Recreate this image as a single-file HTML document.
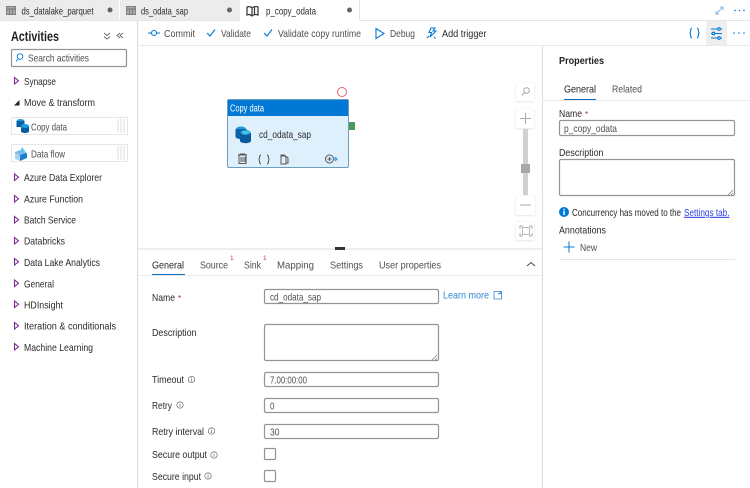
<!DOCTYPE html>
<html><head><meta charset="utf-8"><style>
html,body{margin:0;padding:0;background:#fff;width:750px;height:488px;overflow:hidden}
svg{display:block}
text{font-family:"Liberation Sans",sans-serif;font-size:10.5px;fill:#2b2a29}
.g{fill:#4f4f4f}
.i{fill:none;stroke:#0078d4;stroke-width:1.100}
.inp{fill:#fff;stroke:#949494;stroke-width:1.200}
.ic{fill:none;stroke:#555;stroke-width:1}
.tri{fill:#fff;stroke:#7a2a90;stroke-width:1.100}
</style></head><body>
<svg width="750" height="488" viewBox="0 0 750 488" xmlns="http://www.w3.org/2000/svg">
<defs><filter id="s" x="-30%" y="-30%" width="160%" height="160%"><feDropShadow dx="0" dy="0.500" stdDeviation="1" flood-color="#000" flood-opacity=".14"/></filter></defs>
<!-- tabs -->
<rect x="0" y="0" width="359" height="20" fill="#ececec"/>
<rect x="119" y="0" width="1" height="20" fill="#fff"/>
<rect x="240" y="0" width="119" height="21" fill="#fff"/>
<rect x="359" y="0" width="1" height="20" fill="#e4e4e4"/>
<rect x="360" y="20" width="390" height="1" fill="#e6e6e6"/>
<rect x="0" y="20" width="240" height="1" fill="#e6e6e6"/>
<g fill="#aaa" stroke="#777" stroke-width=".9"><rect x="6.500" y="6.500" width="9" height="8"/><path d="M6.500 9h9M9.500 9v5.500M12.500 9v5.500"/><rect x="126.500" y="6.500" width="9" height="8"/><path d="M126.500 9h9M129.500 9v5.500M132.500 9v5.500"/></g>
<g fill="none" stroke="#333" stroke-width="1.200"><path d="M247 7c3-1 4 0 5 1c1-1 3-2 6-1v8c-3-1-5 0-6 1c-1-1-3-2-5-1zM252 8v8M254.500 7v8"/></g>
<text x="21.500" y="14.300" textLength="72" lengthAdjust="spacingAndGlyphs">ds_datalake_parquet</text>
<text x="141" y="14.300" textLength="47" lengthAdjust="spacingAndGlyphs">ds_odata_sap</text>
<text x="266" y="14.300" textLength="50" lengthAdjust="spacingAndGlyphs">p_copy_odata</text>
<circle cx="110" cy="10" r="2.500" fill="#666"/><circle cx="229.500" cy="10" r="2.500" fill="#666"/><circle cx="349.500" cy="10" r="2.500" fill="#666"/>
<path d="M716 14l7-7M720 7h3v3M716 11v3h3" fill="none" stroke="#8ab8de" stroke-width="1"/>
<g fill="#0078d4"><circle cx="735" cy="10.500" r=".8"/><circle cx="739.500" cy="10.500" r=".8"/><circle cx="744" cy="10.500" r=".8"/></g>
<!-- toolbar -->
<rect x="137" y="45" width="613" height="1" fill="#e8e8e8"/>
<rect x="137" y="21" width="1" height="467" fill="#dcdcdc"/>
<g class="i"><circle cx="154" cy="33" r="2.500"/><path d="M148 33h3.500M156.500 33h3.500"/><path d="M207 33l3 3l5-6.500"/><path d="M264 33l3 3l5-6.500"/><path d="M376 28.500v10l8-5z"/></g>
<text class="g" x="164" y="37" textLength="31" lengthAdjust="spacingAndGlyphs">Commit</text>
<text class="g" x="221" y="37" textLength="30" lengthAdjust="spacingAndGlyphs">Validate</text>
<text class="g" x="278" y="37" textLength="83" lengthAdjust="spacingAndGlyphs">Validate copy runtime</text>
<text class="g" x="390" y="37" textLength="25" lengthAdjust="spacingAndGlyphs">Debug</text>
<path class="i" d="M431 28h4l-2 3h3l-6 6l1.500-4.500h-2.500zM434 37l1.500 1.500M429 36l-2 2" />
<text x="442" y="37" textLength="44.500" lengthAdjust="spacingAndGlyphs">Add trigger</text>
<path class="i" d="M692 28c-2 0-1 4-2 5c1 1 0 5 2 5M697 28c2 0 1 4 2 5c-1 1 0 5-2 5"/>
<rect x="706" y="21" width="21" height="24" fill="#eeeeee"/>
<g class="i"><path d="M711 29h11M711 33.500h11M711 38h11"/><circle cx="719" cy="29" r="1.300" fill="#eee"/><circle cx="713.500" cy="33.500" r="1.300" fill="#eee"/><circle cx="719" cy="38" r="1.300" fill="#eee"/></g>
<g fill="#0078d4"><circle cx="734" cy="33" r=".8"/><circle cx="739" cy="33" r=".8"/><circle cx="744" cy="33" r=".8"/></g>
<!-- sidebar -->
<text x="11" y="41" textLength="48" lengthAdjust="spacingAndGlyphs" style="font-size:14px;font-weight:bold;fill:#222">Activities</text>
<path d="M104 33l3 2.500l3-2.500M104 36.500l3 2.500l3-2.500M120 33l-3 2.500l3 2.500M123 33l-3 2.500l3 2.500" fill="none" stroke="#666" stroke-width=".9"/>
<rect x="11.500" y="49.500" width="115" height="17" rx="1" class="inp"/>
<circle cx="20" cy="56.500" r="2.800" fill="none" stroke="#0078d4" stroke-width=".9"/><path d="M18 59l-2 2.500" stroke="#0078d4" stroke-width=".9"/>
<text class="g" x="28" y="61.500" textLength="61" lengthAdjust="spacingAndGlyphs">Search activities</text>
<g>
<path class="tri" d="M14.500 77.500v6.500l4-3.250z"/><text x="24" y="84.800" textLength="32" lengthAdjust="spacingAndGlyphs">Synapse</text>
<path d="M14 105.500h5.500v-5.500z" fill="#222"/><text x="24" y="105.800" textLength="71" lengthAdjust="spacingAndGlyphs">Move &amp; transform</text>
<path class="tri" d="M14.500 174v6.500l4-3.250z"/><text x="24" y="181" textLength="78" lengthAdjust="spacingAndGlyphs">Azure Data Explorer</text>
<path class="tri" d="M14.500 195.500v6.500l4-3.250z"/><text x="24" y="202.500" textLength="59" lengthAdjust="spacingAndGlyphs">Azure Function</text>
<path class="tri" d="M14.500 216.500v6.500l4-3.250z"/><text x="24" y="223.500" textLength="52" lengthAdjust="spacingAndGlyphs">Batch Service</text>
<path class="tri" d="M14.500 237.500v6.500l4-3.250z"/><text x="24" y="244.500" textLength="41" lengthAdjust="spacingAndGlyphs">Databricks</text>
<path class="tri" d="M14.500 258.500v6.500l4-3.250z"/><text x="24" y="265.800" textLength="76" lengthAdjust="spacingAndGlyphs">Data Lake Analytics</text>
<path class="tri" d="M14.500 280v6.500l4-3.250z"/><text x="24" y="287.300" textLength="30" lengthAdjust="spacingAndGlyphs">General</text>
<path class="tri" d="M14.500 301v6.500l4-3.250z"/><text x="24" y="308.500" textLength="39" lengthAdjust="spacingAndGlyphs">HDInsight</text>
<path class="tri" d="M14.500 322.500v6.500l4-3.250z"/><text x="24" y="329.500" textLength="92" lengthAdjust="spacingAndGlyphs">Iteration &amp; conditionals</text>
<path class="tri" d="M14.500 343.500v6.500l4-3.250z"/><text x="24" y="350.800" textLength="69" lengthAdjust="spacingAndGlyphs">Machine Learning</text>
</g>
<rect x="11.500" y="117.500" width="116" height="17" fill="#fff" stroke="#e6e6e6"/>
<rect x="11.500" y="144.500" width="116" height="17" fill="#fff" stroke="#e6e6e6"/>
<g stroke="#dcdcdc" stroke-width="1"><path d="M118 119v14M121 119v14M124 119v14M118 146v14M121 146v14M124 146v14"/></g>
<g><ellipse cx="20.500" cy="121" rx="4" ry="2" fill="#1ea0d8"/><rect x="16.500" y="121" width="8" height="6" fill="#0b62a8"/><rect x="21" y="126" width="8" height="5.500" fill="#0a5a9e"/><ellipse cx="25" cy="131.500" rx="4" ry="1.500" fill="#0a5a9e"/><ellipse cx="25" cy="126" rx="4" ry="2" fill="#1ea0d8"/></g>
<text class="g" x="31" y="130.300" textLength="36" lengthAdjust="spacingAndGlyphs">Copy data</text>
<g><path d="M22 147l5 7h-8z" fill="#59c6ee"/><path d="M15 152l5-2l5 3v5l-5 2l-5-2z" fill="#7bb8e6"/><path d="M20 155l7-2v5l-7 3z" fill="#1c7fc9"/><path d="M15 153l5 2v6l-5-2z" fill="#a8d3f0"/></g>
<text class="g" x="31" y="157.300" textLength="34" lengthAdjust="spacingAndGlyphs">Data flow</text>
<!-- node -->
<circle cx="342" cy="92" r="4.500" fill="#fff" stroke="#e5626a" stroke-width="1"/>
<rect x="349" y="122" width="6" height="8" fill="#4b9a5b"/>
<rect x="227.500" y="99.500" width="121" height="68" rx="1.500" fill="#def0fc" stroke="#6a9cbe"/>
<rect x="228" y="100" width="120" height="16" fill="#0078d4"/>
<text x="230" y="111.500" textLength="34" lengthAdjust="spacingAndGlyphs" style="fill:#fff;font-size:10px">Copy data</text>
<g><ellipse cx="241" cy="129" rx="5" ry="2.500" fill="#1ea0d8"/><rect x="235.500" y="129" width="11" height="8" fill="#0b62a8"/><ellipse cx="241" cy="137" rx="5.500" ry="2" fill="#0b62a8"/><rect x="240" y="133" width="11" height="8" fill="#0a5a9e"/><ellipse cx="245.500" cy="141" rx="5.500" ry="2.200" fill="#0a5a9e"/><ellipse cx="245.500" cy="132.500" rx="5" ry="2.500" fill="#1ea0d8"/><ellipse cx="245.500" cy="132.500" rx="4" ry="1.600" fill="#46bfe8"/></g>
<text x="259" y="137.800" textLength="52" lengthAdjust="spacingAndGlyphs">cd_odata_sap</text>
<g class="ic"><path d="M238 155h9M240 155v-1h5v1M239 155.500v8h7v-8M241 157v5M243 157v5M245 157v5"/><path d="M261 155c-2 0-1 3-2 4.500c1 1.500 0 4.500 2 4.500M267 155c2 0 1 3 2 4.500c-1 1.500 0 4.500-2 4.500"/><path d="M281 156h4l1 1v7h-5zM281 156v-1h3l4 3v5h-2"/><circle cx="329.500" cy="159" r="4"/><path d="M327.500 159h4M329.500 157v4"/></g>
<path d="M333.500 159h3M335 157l2 2l-2 2" fill="none" stroke="#2a8fd8" stroke-width="1"/>
<!-- zoom controls -->
<g fill="#fff" filter="url(#s)"><rect x="516" y="83" width="18" height="18"/><rect x="516" y="109" width="18" height="19"/><rect x="516" y="196" width="19" height="19"/><rect x="516" y="222" width="18" height="18"/></g>
<rect x="523" y="129" width="5" height="66" fill="#d0d0d0"/>
<rect x="521" y="164" width="9" height="9" fill="#a8a8a8"/>
<g fill="none" stroke="#aaa" stroke-width="1"><circle cx="526.500" cy="90.500" r="2.800"/><path d="M524.500 92.500l-2.500 3"/><path d="M520 118.500h11M525.500 113v11"/><path d="M520 205h11"/><path d="M520 229v-3h3M529 226h3v3M532 233v3h-3M523 236h-3v-3"/><rect x="522.500" y="227.500" width="7" height="7" stroke="#bbb"/></g>
<!-- lower panel -->
<rect x="138" y="248" width="404" height="2" fill="#eeeeee"/>
<rect x="335" y="247" width="10" height="3" fill="#333"/>
<text x="152" y="268.300" textLength="32" lengthAdjust="spacingAndGlyphs" style="fill:#222">General</text>
<rect x="152" y="274" width="33" height="1.500" fill="#0f6cbd"/>
<rect x="138" y="275" width="404" height="1" fill="#ececec"/>
<text class="g" x="200" y="268.300" textLength="28" lengthAdjust="spacingAndGlyphs">Source</text>
<text class="g" x="244" y="268.300" textLength="17" lengthAdjust="spacingAndGlyphs">Sink</text>
<text class="g" x="277" y="268.300" textLength="37" lengthAdjust="spacingAndGlyphs">Mapping</text>
<text class="g" x="330" y="268.300" textLength="33" lengthAdjust="spacingAndGlyphs">Settings</text>
<text class="g" x="379" y="268.300" textLength="62" lengthAdjust="spacingAndGlyphs">User properties</text>
<text x="230" y="260" style="font-size:6.500px;fill:#d13438">1</text>
<text x="263" y="260" style="font-size:6.500px;fill:#d13438">1</text>
<path d="M527 266l4-3.500l4 3.500" fill="none" stroke="#444" stroke-width="1"/>
<text x="152" y="301" textLength="23" lengthAdjust="spacingAndGlyphs">Name</text><text x="178" y="301" style="font-size:8px;fill:#a4262c">*</text>
<rect x="264.500" y="289.500" width="174" height="14" rx="1.500" class="inp"/>
<text class="g" x="270" y="300.300" textLength="51" lengthAdjust="spacingAndGlyphs">cd_odata_sap</text>
<text x="443" y="298.300" textLength="46" lengthAdjust="spacingAndGlyphs" style="fill:#2b88d8">Learn more</text>
<path d="M494 291.500h7.500v7.500h-7.500zM498 293.500h3.500M501.500 291.500l-3 3" fill="none" stroke="#2b88d8" stroke-width=".8"/>
<text x="152" y="336" textLength="44.500" lengthAdjust="spacingAndGlyphs">Description</text>
<rect x="264.500" y="324.500" width="174" height="36" rx="1.500" class="inp"/>
<path d="M437 355l-5 5M437 358l-2 2" stroke="#777" stroke-width=".7"/>
<text x="152" y="383" textLength="32" lengthAdjust="spacingAndGlyphs">Timeout</text>
<rect x="264.500" y="372.500" width="174" height="14" rx="1.500" class="inp"/>
<text class="g" x="270" y="383.300" textLength="37" lengthAdjust="spacingAndGlyphs">7.00:00:00</text>
<text x="152" y="409" textLength="20" lengthAdjust="spacingAndGlyphs">Retry</text>
<rect x="264.500" y="398.500" width="174" height="14" rx="1.500" class="inp"/>
<text class="g" x="270" y="409.300" textLength="4.500" lengthAdjust="spacingAndGlyphs">0</text>
<text x="152" y="435" textLength="52" lengthAdjust="spacingAndGlyphs">Retry interval</text>
<rect x="264.500" y="424.500" width="174" height="14" rx="1.500" class="inp"/>
<text class="g" x="270" y="435.300" textLength="9.500" lengthAdjust="spacingAndGlyphs">30</text>
<text x="152" y="458" textLength="55" lengthAdjust="spacingAndGlyphs">Secure output</text>
<text x="152" y="480" textLength="49" lengthAdjust="spacingAndGlyphs">Secure input</text>
<rect x="264.500" y="448.500" width="11" height="11" rx="1" class="inp"/>
<rect x="264.500" y="470.500" width="11" height="11" rx="1" class="inp"/>
<g fill="none" stroke="#666" stroke-width=".7"><circle cx="191.500" cy="379.500" r="3.200"/><path d="M191.500 378.500v3M191.500 377v.8"/><circle cx="180" cy="405" r="3.200"/><path d="M180 404v3M180 402.500v.8"/><circle cx="211.500" cy="431" r="3.200"/><path d="M211.500 430v3M211.500 428.500v.8"/><circle cx="214" cy="455" r="3.200"/><path d="M214 454v3M214 452.500v.8"/><circle cx="208" cy="476" r="3.200"/><path d="M208 475v3M208 473.500v.8"/></g>
<!-- properties -->
<rect x="542" y="46" width="1" height="442" fill="#dcdcdc"/>
<text x="559" y="64" textLength="45" lengthAdjust="spacingAndGlyphs" style="font-weight:bold;fill:#222">Properties</text>
<text x="564" y="92.300" textLength="32" lengthAdjust="spacingAndGlyphs" style="fill:#222">General</text>
<text class="g" x="612" y="92.300" textLength="30" lengthAdjust="spacingAndGlyphs">Related</text>
<rect x="564" y="99" width="32" height="1.500" fill="#0f6cbd"/>
<rect x="543" y="100" width="207" height="1" fill="#ececec"/>
<text x="559" y="117" textLength="23" lengthAdjust="spacingAndGlyphs">Name</text><text x="585" y="117" style="font-size:8px;fill:#a4262c">*</text>
<rect x="559.500" y="120.500" width="175" height="15" rx="1.500" class="inp"/>
<text class="g" x="564" y="132" textLength="53" lengthAdjust="spacingAndGlyphs">p_copy_odata</text>
<text x="559" y="156" textLength="44.500" lengthAdjust="spacingAndGlyphs">Description</text>
<rect x="559.500" y="159.500" width="175" height="36" rx="1.500" class="inp"/>
<path d="M733 190l-5 5M733 193l-2 2" stroke="#777" stroke-width=".7"/>
<circle cx="564" cy="212" r="5" fill="#0078d4"/><rect x="563.300" y="211" width="1.500" height="4" fill="#fff"/><rect x="563.300" y="208.800" width="1.500" height="1.400" fill="#fff"/>
<text x="572" y="215.800" textLength="109" lengthAdjust="spacingAndGlyphs">Concurrency has moved to the</text>
<text x="684" y="215.800" textLength="45.500" lengthAdjust="spacingAndGlyphs" text-decoration="underline" style="fill:#2f3fe0">Settings tab.</text>
<text x="559" y="233.300" textLength="47" lengthAdjust="spacingAndGlyphs">Annotations</text>
<path d="M563.500 247h11M569 241.500v11" stroke="#0078d4" stroke-width="1"/>
<text class="g" x="580" y="250.800" textLength="17" lengthAdjust="spacingAndGlyphs">New</text>
<rect x="559" y="259" width="176" height="1" fill="#e6e6e6"/>
</svg>
</body></html>
